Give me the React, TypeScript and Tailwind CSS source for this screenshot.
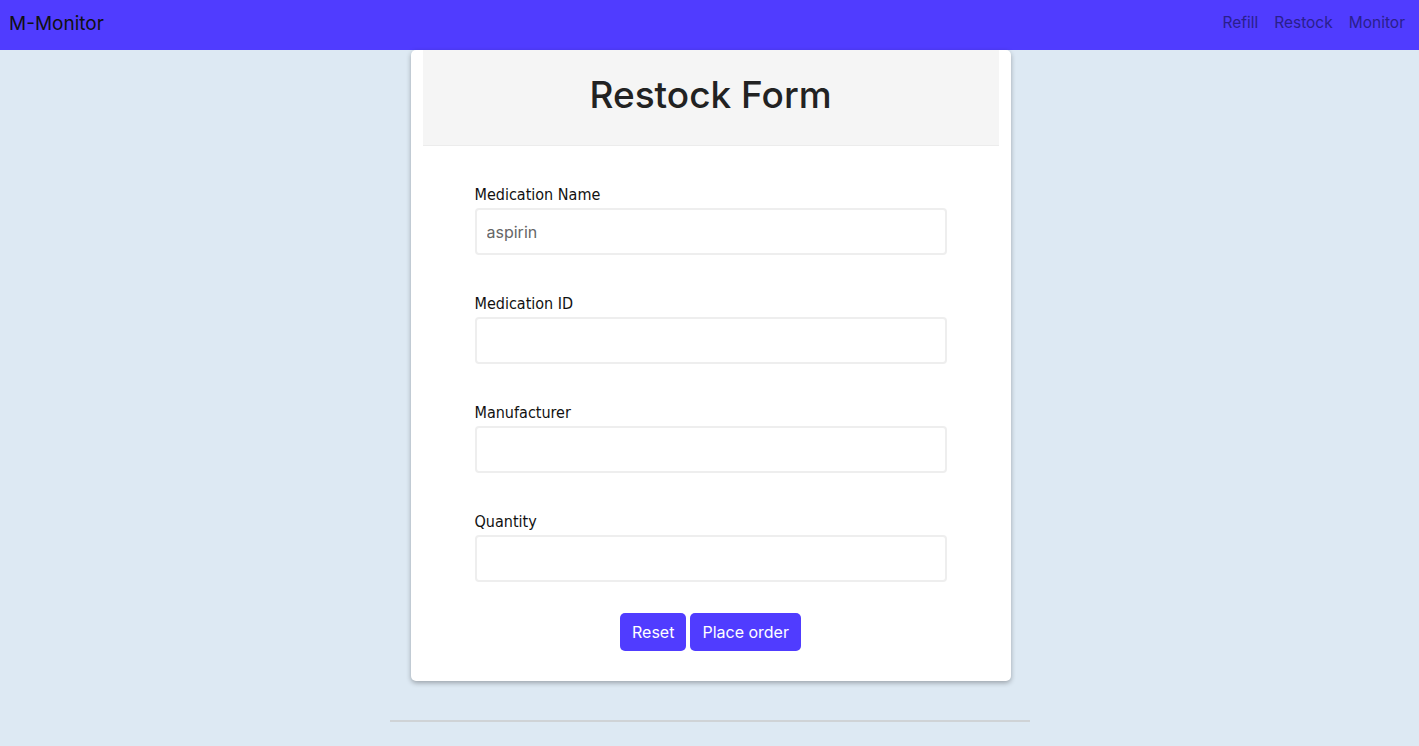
import { useState } from "react";

const fields = [
  { id: "name", label: "Medication Name", initial: "aspirin" },
  { id: "medId", label: "Medication ID", initial: "" },
  { id: "manufacturer", label: "Manufacturer", initial: "" },
  { id: "quantity", label: "Quantity", initial: "" },
];

export default function App() {
  const [values, setValues] = useState<Record<string, string>>(
    Object.fromEntries(fields.map((f) => [f.id, f.initial]))
  );

  const reset = () => setValues(Object.fromEntries(fields.map((f) => [f.id, ""])));

  return (
    <div className="min-h-[746px] bg-[#dde9f3] font-['Inter','Liberation_Sans',sans-serif]">
      {/* Navbar */}
      <nav className="flex h-[50px] items-center justify-between bg-[#503cff] pb-[5px] pl-[9px] pr-[14px]">
        <span className="mt-[4px] text-[19px] text-[#111]">M-Monitor</span>
        <div className="flex gap-[16px] text-[15.5px] text-[#2a1f8c]">
          <a href="#">Refill</a>
          <a href="#">Restock</a>
          <a href="#">Monitor</a>
        </div>
      </nav>

      {/* Card */}
      <div className="mx-auto w-[600px] translate-x-[1px] rounded-[5px] bg-white pb-[30px] shadow-[0_2px_5px_rgba(0,0,0,0.3)]">
        <div className="mx-3 flex h-[96px] items-center justify-center border-b border-[#ececec] bg-[#f5f5f5] pb-[6px]">
          <h1 className="text-[37px] font-medium text-[#222]">Restock Form</h1>
        </div>

        <form className="px-16 pt-[39px]" onSubmit={(e) => e.preventDefault()}>
          <div className="flex flex-col gap-[39px]">
            {fields.map((f) => (
              <div key={f.id} className="flex flex-col">
                <label
                  htmlFor={f.id}
                  className="mb-[3px] font-['DejaVu_Sans_Condensed',sans-serif] text-[16px] leading-[20px] text-[#111]"
                >
                  {f.label}
                </label>
                <input
                  id={f.id}
                  value={values[f.id]}
                  onChange={(e) => setValues({ ...values, [f.id]: e.target.value })}
                  className="h-[47px] rounded-[4px] border-2 border-[#eee] px-[10px] text-[16px] text-[#666] outline-none"
                />
              </div>
            ))}
          </div>

          <div className="mt-[31px] flex justify-center gap-1">
            <button
              type="button"
              onClick={reset}
              className="h-[38px] rounded-[5px] bg-[#503cff] px-[12px] text-[16px] text-white"
            >
              Reset
            </button>
            <button
              type="submit"
              className="h-[38px] rounded-[5px] bg-[#503cff] px-[12px] text-[16px] text-white"
            >
              Place order
            </button>
          </div>
        </form>
      </div>

      <hr className="mx-auto mt-[39px] w-[640px] border-t-2 border-[#cfd3d6]" />
    </div>
  );
}
